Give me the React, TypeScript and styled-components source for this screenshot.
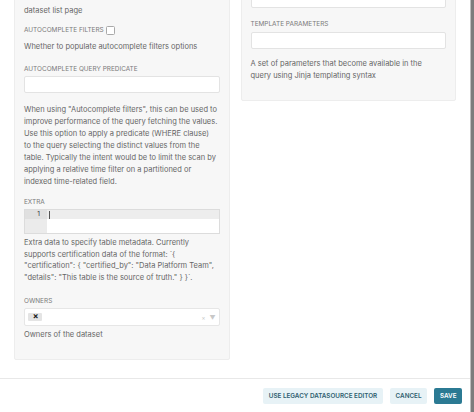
import React from "react";
import styled, { createGlobalStyle } from "styled-components";

const GlobalStyle = createGlobalStyle`
  html, body {
    margin: 0;
    padding: 0;
    background: #ffffff;
    overflow: hidden;
  }
  body {
    font-family: Inter, "Noto Sans", "Liberation Sans", sans-serif;
    color: #666666;
  }
`;

const Page = styled.div`
  display: flex;
  width: 474px;
  height: 412px;
  overflow: hidden;
`;

const Main = styled.div`
  flex: 1;
  min-width: 0;
  display: flex;
  flex-direction: column;
`;

const ScrollThumb = styled.div`
  flex: none;
  width: 3px;
  background: #7c7c7c;
  border-left: 1px solid #bdbdbd;
`;

const ModalBody = styled.div`
  flex: none;
  height: 378px;
  overflow: hidden;
`;

/* body is scrolled down: the tops of both panels are above the fold */
const Columns = styled.div`
  display: flex;
  align-items: flex-start;
  gap: 11px;
  padding: 0 14px;
  margin-top: -20px;
`;

const Panel = styled.div`
  box-sizing: border-box;
  width: 216px;
  display: flex;
  flex-direction: column;
  padding: 0 9px 18.5px;
  background: #f7f7f7;
  border: 1px solid #ededed;
  border-radius: 2px;
`;

const Field = styled.div<{ $gap?: number }>`
  display: flex;
  flex-direction: column;
  margin-top: ${(p) => (p.$gap ?? 11) + "px"};
`;

const Label = styled.div`
  display: flex;
  align-items: center;
  gap: 2.5px;
  height: 10px;
  margin-bottom: 2.5px;
  font-size: 6.45px;
  line-height: 10px;
  text-transform: uppercase;
  color: #7a7a7a;
`;

const Checkbox = styled.span`
  box-sizing: border-box;
  width: 9px;
  height: 9px;
  background: #ffffff;
  border: 1px solid #a9a9a9;
  border-radius: 1.5px;
`;

const Description = styled.div<{ $top?: number }>`
  margin-top: ${(p) => (p.$top ?? 3) + "px"};
  font-size: 7.5px;
  line-height: 11.85px;
  white-space: nowrap;
  color: #666666;
`;

const Input = styled.div<{ $top?: number }>`
  box-sizing: border-box;
  height: 17px;
  margin-top: ${(p) => (p.$top ?? 0) + "px"};
  background: #ffffff;
  border: 1px solid #e3e3e3;
  border-radius: 2px;
`;

const Editor = styled.div`
  box-sizing: border-box;
  display: flex;
  height: 25px;
  background: #ffffff;
  border: 1px solid #dcdcdc;
`;

const Gutter = styled.div`
  width: 22px;
  background: #ebebeb;
`;

const LineNumber = styled.div`
  height: 9px;
  padding-right: 7px;
  text-align: right;
  font-size: 6.6px;
  line-height: 9px;
  color: #333333;
  background: #e0e0e0;
`;

const Code = styled.div`
  flex: 1;
`;

const ActiveLine = styled.div`
  display: flex;
  align-items: center;
  height: 9px;
  padding-left: 2px;
  background: #ededed;
`;

const Cursor = styled.span`
  width: 0.7px;
  height: 8px;
  background: #555555;
`;

const Select = styled.div`
  box-sizing: border-box;
  display: flex;
  align-items: center;
  gap: 4px;
  height: 18px;
  padding: 0 3px 0 2.5px;
  background: #ffffff;
  border: 1px solid #e6e6e6;
  border-radius: 2px;
`;

const Tag = styled.span`
  display: flex;
  align-items: center;
  justify-content: flex-end;
  box-sizing: border-box;
  width: 14px;
  height: 7.5px;
  padding-right: 3px;
  background: #e4e4e4;
  border-radius: 1px;
  font-size: 8.5px;
  line-height: 7.5px;
  font-weight: 700;
  color: #1a1a1a;
`;

const Spacer = styled.span`
  flex: 1;
`;

const SelectIcon = styled.span`
  font-size: 6px;
  color: #c8c8c8;
`;

const Footer = styled.div`
  flex: 1;
  display: flex;
  justify-content: flex-end;
  align-items: flex-start;
  gap: 7.5px;
  padding: 9px 8px 0;
  border-top: 1px solid #e8e8e8;
`;

const Button = styled.button<{ $primary?: boolean }>`
  height: 16px;
  padding: 0 5.5px;
  border: none;
  border-radius: 2px;
  font-family: Inter, "Noto Sans", "Liberation Sans", sans-serif;
  font-size: 6.3px;
  font-weight: 600;
  text-transform: uppercase;
  background: ${(p) => (p.$primary ? "#2b7a93" : "#e7f2f6")};
  color: ${(p) => (p.$primary ? "#ffffff" : "#2f5f70")};
`;

export default function App() {
  return (
    <>
      <GlobalStyle />
      <Page>
        <Main>
          <ModalBody>
            <Columns>
              <Panel>
                <Description $top={23.5}>dataset list page</Description>
                <Field $gap={9.1}>
                  <Label>
                    Autocomplete filters <Checkbox />
                  </Label>
                  <Description $top={3.2}>
                    Whether to populate autocomplete filters options
                  </Description>
                </Field>
                <Field>
                  <Label>Autocomplete query predicate</Label>
                  <Input />
                  <Description $top={11}>
                    When using "Autocomplete filters", this can be used to
                    <br />
                    improve performance of the query fetching the values.
                    <br />
                    Use this option to apply a predicate (WHERE clause)
                    <br />
                    to the query selecting the distinct values from the
                    <br />
                    table. Typically the intent would be to limit the scan by
                    <br />
                    applying a relative time filter on a partitioned or
                    <br />
                    indexed time-related field.
                  </Description>
                </Field>
                <Field $gap={9.2}>
                  <Label>Extra</Label>
                  <Editor>
                    <Gutter>
                      <LineNumber>1</LineNumber>
                    </Gutter>
                    <Code>
                      <ActiveLine>
                        <Cursor />
                      </ActiveLine>
                    </Code>
                  </Editor>
                  <Description $top={2.6}>
                    Extra data to specify table metadata. Currently
                    <br />
                    supports certification data of the format: `{"{"}
                    <br />
                    "certification": {"{"} "certified_by": "Data Platform Team",
                    <br />
                    "details": "This table is the source of truth." {"} }"}`.
                  </Description>
                </Field>
                <Field $gap={11.5}>
                  <Label>Owners</Label>
                  <Select>
                    <Tag>×</Tag>
                    <Spacer />
                    <SelectIcon>×</SelectIcon>
                    <SelectIcon>▼</SelectIcon>
                  </Select>
                  <Description $top={2.6}>Owners of the dataset</Description>
                </Field>
              </Panel>
              <Panel>
                <Input $top={10} />
                <Field $gap={11.2}>
                  <Label>Template parameters</Label>
                  <Input />
                  <Description $top={9.6}>
                    A set of parameters that become available in the
                    <br />
                    query using Jinja templating syntax
                  </Description>
                </Field>
              </Panel>
            </Columns>
          </ModalBody>
          <Footer>
            <Button>Use legacy datasource editor</Button>
            <Button>Cancel</Button>
            <Button $primary>Save</Button>
          </Footer>
        </Main>
        <ScrollThumb />
      </Page>
    </>
  );
}
